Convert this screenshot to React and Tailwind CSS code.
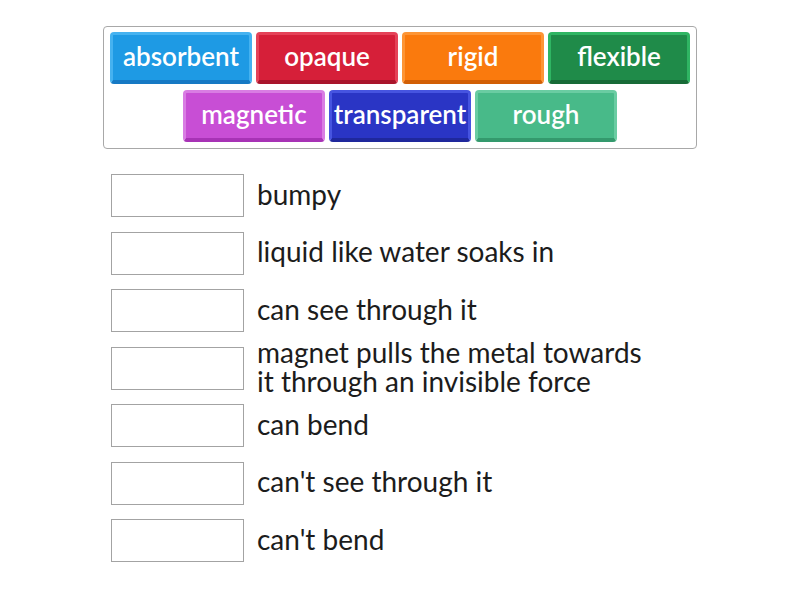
const tiles = [
  { label: 'absorbent', cls: 'bg-[#1e9ae4] border-[#45b2f0] border-b-[#1679c4]' },
  { label: 'opaque', cls: 'bg-[#d61f39] border-[#e54258] border-b-[#a9152b]' },
  { label: 'rigid', cls: 'bg-[#fa7a0d] border-[#fd9535] border-b-[#d25f05]' },
  { label: 'flexible', cls: 'bg-[#1f8b49] border-[#2fb563] border-b-[#176b37]' },
  { label: 'magnetic', cls: 'bg-[#c84ed5] border-[#d97de3] border-b-[#a733b5]' },
  { label: 'transparent', cls: 'bg-[#2a35c5] border-[#4654e0] border-b-[#1f289c]' },
  { label: 'rough', cls: 'bg-[#48ba89] border-[#6acca2] border-b-[#34996d]' },
];

const items = [
  'bumpy',
  'liquid like water soaks in',
  'can see through it',
  'magnet pulls the metal towards it through an invisible force',
  'can bend',
  "can't see through it",
  "can't bend",
];

export default function App() {
  return (
    <div className="w-[800px] h-[600px] bg-white font-['Lato',sans-serif] flex flex-col items-center pt-[26px]">
      <div className="w-[594px] border border-[#a8a8a8] rounded-[4px] pt-[5px] pb-[6px] px-[6px] flex flex-wrap justify-center gap-x-[4px] gap-y-[6px]">
        {tiles.map((t) => (
          <div
            key={t.label}
            className={`w-[142px] h-[52px] rounded-[4px] border-x-[3px] border-t-[3px] border-b-[4px] flex items-center justify-center text-white text-[26px] font-semibold leading-none pb-[3px] ${t.cls}`}
          >
            {t.label}
          </div>
        ))}
      </div>

      <div className="w-[800px] pl-[111px] mt-[25px] flex flex-col gap-[14.5px]">
        {items.map((text) => (
          <div key={text} className="h-[43px] flex items-center gap-[13px]">
            <div className="w-[133px] h-[43px] shrink-0 border border-[#a3a3a3] bg-white" />
            <div className="w-[400px] text-[28px] leading-[29px] text-[#1c1c1c] pb-[3px]">{text}</div>
          </div>
        ))}
      </div>
    </div>
  );
}
